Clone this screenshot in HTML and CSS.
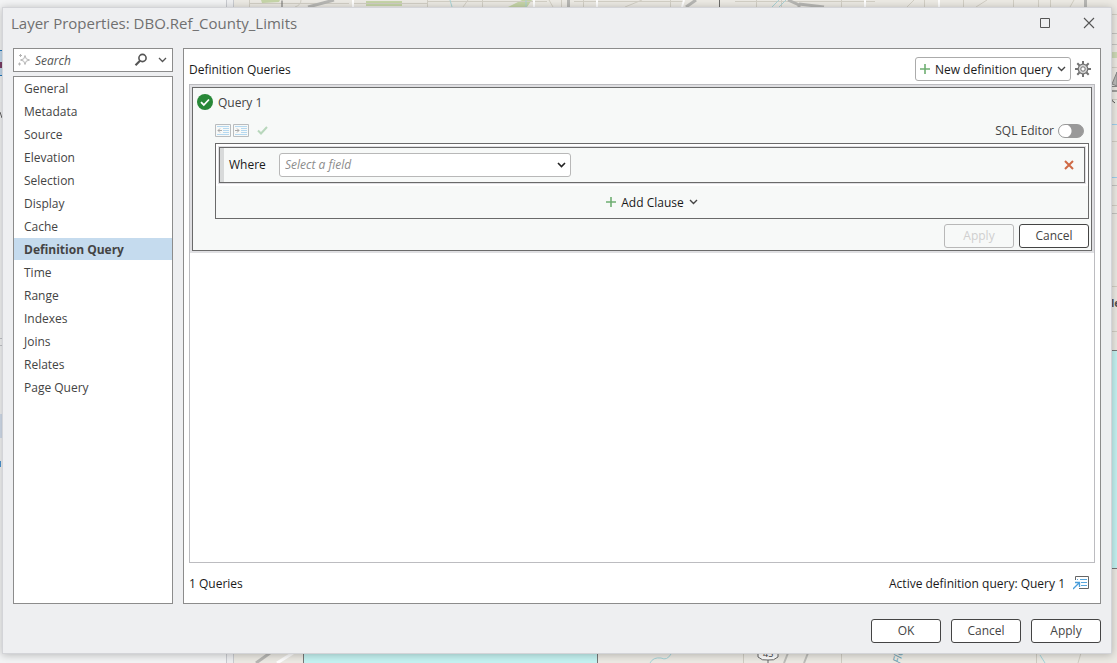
FILE: index.html
```
<!DOCTYPE html>
<html lang="en">
<head>
  <meta charset="UTF-8">
  <meta name="viewport" content="width=device-width, initial-scale=1.0">
  <title>Layer Properties: DBO.Ref_County_Limits</title>
  <link rel="stylesheet" href="styles.css">
</head>
<body>
<svg class="map" viewBox="0 0 1117 663" preserveAspectRatio="none" aria-hidden="true">
  <rect width="1117" height="663" fill="#eceae4"/>
  <!-- application pane left of the map -->
  <rect width="227" height="663" fill="#f3f4f5"/>
  <path d="M226.500 0v663M233.500 0v663" stroke="#c9cbd0"/>
  <rect x="227" width="6" height="663" fill="#eeeff1"/>
  <rect y="50" width="3" height="26" fill="#c5dbee"/>
  <path d="M0 50.500h3M0 75.500h3" stroke="#1d78c0"/>
  <path d="M0 338.500h3M0 345.500h3" stroke="#c4c6ca"/>
  <rect y="62" width="2" height="6" fill="#7c3e66"/>
  <rect y="414" width="3" height="24" fill="#d3dfed"/>
  <rect y="461" width="1" height="6" fill="#4f96d0"/>
  <path d="M0 112l2 6" stroke="#666"/>
  <!-- streets above the window -->
  <path d="M261 0h19l-1 2-17 1zM366 1h36v5h-36zM508 7l14-7h10l-5 7z" fill="#c6d5a8"/>
  <g fill="none" stroke="#d2cfc5">
    <path d="M249.500 0v7M249 3.500h100M301 0q0 5-6 7M353 3.500h74M427.500 0v7M427 1.500h120M468 0l-5 7M482.500 0v7M549 0l4 7M561.500 0v7M574 1.500h110M583.500 0v7M642 0l-17 7M670.500 0v7M735 1.500h140M756.500 0v7M781.500 0v7M841.500 0v7M914 0l-7 7M924.500 0v7M963.500 0v7M987 0l-11 7M1013.500 0v7M1038.500 0v7M1050.500 0v7M1074 0l-4 7"/>
    <path d="M1111 14.500h6M1111 67.500h6M1111 99.500h6M1111 141.500h6M1111 205.500h6M1111 286.500h6M1111 331.500h6"/>
  </g>
  <path d="M353 0v7M534 0v7M597 0v7M684 0l-2 7M865 0v7M939 0v7" stroke="#fff" stroke-width="2"/>
  <path d="M282 0.500v7M719.500 0v7" stroke="#6c6c6a"/>
  <path d="M308 7l26-7M686 7l10-7M788 0l11 5v2M799 4l25 3M568.500 0v7M1085.500 0v7" fill="none" stroke="#b7b7b4" stroke-width="3"/>
  <path d="M450 0l2 7M526 0v7M779 0l-7 7M786 0l-7 7" stroke="#a9d2d6" fill="none"/>
  <!-- right edge of the map -->
  <path d="M1111 33.500h6M1111 44.500h6M1111 185.500h6M1111 213.500h6" stroke="#c4c4c1"/>
  <path d="M1111 52h6v6h-6z" fill="#cfdbb8"/>
  <path d="M1112 84l5-12v14zM1111 86.500h6" fill="#bcbcba" stroke="#888"/>
  <path d="M1111 91h6M1111 97q0 4 4 6" fill="none" stroke="#555"/>
  <path d="M1111 124.500h6M1111 177.500h6" stroke="#9fd0f0"/>
  <rect x="1111" y="351" width="6" height="217" fill="#c5f3f2"/>
  <path d="M1111 350.500h6M1111 568.500h6" stroke="#777"/>
  <text class="map-label" x="1111" y="307">le</text>
  <!-- strip below the window -->
  <rect x="303" y="653" width="294" height="10" fill="#c5f3f2"/>
  <path d="M303.500 653v10M597.500 653v10" stroke="#777"/>
  <path d="M256 663l14-10" stroke="#b7b7b4" stroke-width="3"/>
  <path d="M277 663l16-10" stroke="#fff" stroke-width="3"/>
  <path d="M650 663q3-6 11-5 6 3 10-4M1040 655l5 8" stroke="#a3d3d9" fill="none"/>
  <path d="M758 653v4q4 4 10 3 6 1 10-3v-4M768 660v3" fill="#fff" stroke="#666"/>
  <text class="road-number" x="763" y="657">45</text>
  <path d="M784 663l4-10M804 663l4-10" stroke="#bdbdb9" stroke-width="2"/>
  <path d="M743.500 653v10M841.500 653v10M1036.500 653v10M1081 653l-3 10" stroke="#cfccc2"/>
  <text class="river-name" transform="translate(900 664) rotate(-75)">Flo</text>
</svg>

<main class="window">
  <header class="titlebar">
    <h1>Layer Properties: DBO.Ref_County_Limits</h1>
    <div class="window-controls">
      <button type="button" aria-label="Maximize">
        <svg width="12" height="12" viewBox="0 0 12 12"><path d="M1.500 1.500h9v9h-9z" fill="none" stroke="#555"/></svg>
      </button>
      <button type="button" aria-label="Close">
        <svg width="12" height="12" viewBox="0 0 12 12"><path d="M1 1l10 10M11 1L1 11" stroke="#555" stroke-width="1.100"/></svg>
      </button>
    </div>
  </header>

  <div class="content">
    <aside class="sidebar">
      <div class="search">
        <svg width="12" height="12" viewBox="0 0 12 12" fill="none" stroke="#b4b4b4" aria-hidden="true">
          <path d="M7 1.500l1.200 3.300L11.500 6 8.200 7.200 7 10.500 5.800 7.200 2.500 6l3.300-1.200z"/>
          <path d="M2.500 0v3M1 1.500h3M1.500 8.500v3M0 10h3"/>
        </svg>
        <input type="text" placeholder="Search" aria-label="Search">
        <button type="button" aria-label="Find">
          <svg width="14" height="14" viewBox="0 0 14 14" fill="none" stroke="#555"><circle cx="8.500" cy="5" r="3.600" stroke-width="1.600"/><path d="M6 7.800L1.500 12.300" stroke-width="2.200"/></svg>
        </button>
        <button type="button" aria-label="Search options">
          <svg width="9" height="6" viewBox="0 0 9 6"><path d="M1 1l3.500 3.500L8 1" fill="none" stroke="#555" stroke-width="1.300"/></svg>
        </button>
      </div>
      <nav class="pages">
        <a href="#">General</a>
        <a href="#">Metadata</a>
        <a href="#">Source</a>
        <a href="#">Elevation</a>
        <a href="#">Selection</a>
        <a href="#">Display</a>
        <a href="#">Cache</a>
        <a href="#" class="active">Definition Query</a>
        <a href="#">Time</a>
        <a href="#">Range</a>
        <a href="#">Indexes</a>
        <a href="#">Joins</a>
        <a href="#">Relates</a>
        <a href="#">Page Query</a>
      </nav>
    </aside>

    <section class="panel">
      <div class="panel-header">
        <h2>Definition Queries</h2>
        <button type="button" class="new-query">
          <svg width="10" height="10" viewBox="0 0 10 10"><path d="M5 0v10M0 5h10" stroke="#6fae72" stroke-width="1.600"/></svg>
          <span>New definition query</span>
          <svg width="9" height="6" viewBox="0 0 9 6"><path d="M1 1l3.500 3.500L8 1" fill="none" stroke="#444" stroke-width="1.400"/></svg>
        </button>
        <button type="button" class="icon-button" aria-label="Options">
          <svg width="16" height="16" viewBox="0 0 16 16" fill="none" stroke="#727272">
            <path d="M8 0v3M8 13v3M0 8h3M13 8h3M2.300 2.300l2.200 2.200M11.500 11.500l2.200 2.200M13.700 2.300l-2.200 2.200M4.500 11.500l-2.200 2.200" stroke-width="2"/>
            <circle cx="8" cy="8" r="4.800" fill="#d2d2d2" stroke-width="1.200"/>
            <circle cx="8" cy="8" r="2.200" fill="#fff"/>
          </svg>
        </button>
      </div>

      <div class="query-list">
        <article class="query">
          <h3>
            <svg width="16" height="16" viewBox="0 0 16 16"><circle cx="8" cy="8" r="8" fill="#288838"/><path d="M4 8.200l2.800 2.800L12 5.500" fill="none" stroke="#fff" stroke-width="1.800"/></svg>
            <span>Query 1</span>
          </h3>
          <div class="query-body">
            <div class="tools">
              <button type="button" aria-label="Remove indent" disabled>
                <svg width="16" height="13" viewBox="0 0 16 13" fill="none"><path d="M.5.500h15v12H.5z" stroke="#b9bcbe"/><path d="M2 2.500h12M8 4.500h6M8 6.500h6M8 8.500h6M2 10.500h12" stroke="#b5d8ef"/><path d="M7 6.500H3M5 4.500l-2 2 2 2" stroke="#aaa"/></svg>
              </button>
              <button type="button" aria-label="Add indent" disabled>
                <svg width="16" height="13" viewBox="0 0 16 13" fill="none"><path d="M.5.500h15v12H.5z" stroke="#b9bcbe"/><path d="M2 2.500h12M8 4.500h6M8 6.500h6M8 8.500h6M2 10.500h12" stroke="#b5d8ef"/><path d="M2 6.500h4M4 4.500l2 2-2 2" stroke="#aaa"/></svg>
              </button>
              <button type="button" class="verify" aria-label="Verify" disabled>
                <svg width="11" height="9" viewBox="0 0 11 9"><path d="M1 4.500l3 3L10 1" fill="none" stroke="#b8d7bc" stroke-width="2"/></svg>
              </button>
              <label class="sql">SQL Editor <input type="checkbox" class="switch"></label>
            </div>

            <div class="clauses">
              <div class="clause-wrap">
                <div class="clause">
                  <label for="field">Where</label>
                  <div class="field">
                    <select id="field">
                      <option>Select a field</option>
                    </select>
                    <svg width="9" height="6" viewBox="0 0 9 6"><path d="M1 1l3.500 3.500L8 1" fill="none" stroke="#222" stroke-width="1.600"/></svg>
                  </div>
                  <button type="button" class="remove" aria-label="Remove clause">
                    <svg width="10" height="10" viewBox="0 0 10 10"><path d="M1 1l8 8M9 1L1 9" stroke="#cf6a45" stroke-width="2"/></svg>
                  </button>
                </div>
              </div>
              <button type="button" class="add-clause">
                <svg width="10" height="10" viewBox="0 0 10 10"><path d="M5 0v10M0 5h10" stroke="#6fae72" stroke-width="1.600"/></svg>
                <span>Add Clause</span>
                <svg width="9" height="6" viewBox="0 0 9 6"><path d="M1 1l3.500 3.500L8 1" fill="none" stroke="#444" stroke-width="1.400"/></svg>
              </button>
            </div>

            <div class="query-actions">
              <button type="button" class="btn" disabled>Apply</button>
              <button type="button" class="btn">Cancel</button>
            </div>
          </div>
        </article>
      </div>

      <div class="panel-footer">
        <span>1 Queries</span>
        <span class="current">Active definition query: Query 1</span>
        <button type="button" class="icon-button" aria-label="Go to active query">
          <svg width="16" height="14" viewBox="0 0 16 14" fill="none">
            <path d="M2.500 4V.5h13v12H6" stroke="#666"/>
            <path d="M4 3.500h1M7 3.500h7M8 6.500h6M8 9.500h6" stroke="#5aa7dc"/>
            <path d="M0 13l6-6M2 6.500h4.500V11" stroke="#4a9edb" stroke-width="1.300"/>
          </svg>
        </button>
      </div>
    </section>
  </div>

  <footer class="buttons">
    <button type="button" class="btn">OK</button>
    <button type="button" class="btn">Cancel</button>
    <button type="button" class="btn">Apply</button>
  </footer>
</main>
</body>
</html>
```
FILE: styles.css
```
* {
  box-sizing: border-box;
}

body {
  margin: 0;
  min-height: 100vh;
  display: flex;
  padding: 7px 5px 9px 2px;
  font-family: "Open Sans", "Noto Sans", sans-serif;
  font-size: 12px;
  line-height: 16px;
  color: #444;
}

h1, h2, h3 {
  margin: 0;
  font-size: 12px;
  font-weight: normal;
}

button, input, select {
  font: inherit;
  color: inherit;
}

button {
  display: flex;
  align-items: center;
  justify-content: center;
  padding: 0;
  border: none;
  background: none;
}

svg {
  flex: none;
  display: block;
}

.map {
  position: absolute;
  top: 0;
  left: 0;
  width: 100%;
  height: 100%;
}

.map-label {
  font-size: 11px;
  font-weight: bold;
  fill: #555;
}

.road-number {
  font-size: 9px;
  fill: #444;
}

.river-name {
  font-size: 11px;
  font-style: italic;
  fill: #6fa3b5;
}

.window {
  position: relative;
  flex: 1;
  display: flex;
  flex-direction: column;
  padding: 0 10px 10px;
  border: 1px solid #d3d4d8;
  background: #eeeff1;
  box-shadow: 0 1px 8px rgba(0, 0, 0, 0.25);
}

.titlebar {
  display: flex;
  align-items: center;
  justify-content: space-between;
  height: 40px;
  margin-left: -2px;
  padding-bottom: 10px;
}

.titlebar h1 {
  font-size: 15px;
  line-height: 20px;
  color: #707070;
}

.window-controls {
  display: flex;
  gap: 32px;
  padding-right: 6px;
}

.content {
  flex: 1;
  display: flex;
  gap: 10px;
}

.sidebar {
  width: 160px;
  display: flex;
  flex-direction: column;
  gap: 4px;
}

.search {
  display: flex;
  align-items: center;
  gap: 5px;
  height: 24px;
  padding: 0 5px 0 4px;
  border: 1px solid #8c8c8c;
  background: #fff;
}

.search input {
  flex: 1;
  min-width: 0;
  padding: 2px 0 0;
  border: none;
  outline: none;
  background: none;
  font-style: italic;
}

.search input::placeholder {
  color: #555;
}

.search button + button {
  padding-left: 5px;
}

.pages {
  flex: 1;
  border: 1px solid #8c8c8c;
  background: #fff;
}

.pages a {
  display: block;
  height: 22px;
  margin-bottom: 1px;
  padding-left: 10px;
  line-height: 24px;
  color: #444;
  text-decoration: none;
}

.pages .active {
  background: #c5dbee;
  font-weight: bold;
}

.panel {
  flex: 1;
  display: flex;
  flex-direction: column;
  padding: 8px 5px 0;
  border: 1px solid #8c8c8c;
  background: #fff;
  color: #1a1a1a;
}

.panel-header {
  display: flex;
  align-items: center;
  gap: 4px;
  height: 24px;
  margin-bottom: 3px;
}

.panel-header h2 {
  flex: 1;
  padding-top: 2px;
}

/* keeps button captions level with their icons */
button span,
.query h3 span,
.panel-footer > span {
  padding-top: 2px;
}

.new-query {
  gap: 5px;
  height: 24px;
  padding: 0 4px;
  border: 1px solid #ababab;
  border-radius: 3px;
  background: #fff;
}

.panel-header .icon-button {
  margin-right: 4px;
}

.query-list {
  flex: 1;
  padding: 2px;
  border: 1px solid #bcbcc0;
}

.query {
  padding: 6px 2px 2px 4px;
  border: 1px solid #6a6a6a;
  background: #f7f9f8;
  box-shadow: 0 0 0 2px #dfdfe2;
}

.query h3 {
  display: flex;
  align-items: center;
  gap: 5px;
  height: 16px;
  color: #444;
}

.query-body {
  padding-left: 18px;
}

.tools {
  display: flex;
  align-items: center;
  gap: 2px;
  margin: 13px 0 5px;
  height: 15px;
}

.verify {
  margin-left: 6px;
}

.sql {
  display: flex;
  align-items: center;
  gap: 4px;
  margin-left: auto;
  margin-right: 5px;
  color: #444;
}

.switch {
  appearance: none;
  width: 26px;
  height: 14px;
  margin: 0;
  border: 1px solid #999;
  border-radius: 7px;
  background: radial-gradient(circle at 6px 6px, #fff 6px, #999 7px);
}

.clauses {
  border: 1px solid #6a6a6a;
}

.clause-wrap {
  padding: 3px;
  background: #fff;
}

.clause {
  display: flex;
  align-items: center;
  height: 36px;
  padding: 0 10px 0 5px;
  border: 1px solid #6a6a6a;
  background: #f7f9f8;
  box-shadow: inset 4px 0 #d8dada, 0 0 0 1px #dfdfe2;
}

.clause label {
  width: 54px;
  padding-left: 4px;
}

.field {
  position: relative;
  width: 292px;
}

.field select {
  appearance: none;
  display: block;
  width: 100%;
  height: 24px;
  padding: 0 5px;
  border: 1px solid #b8b8b8;
  border-radius: 3px;
  background: #fff;
  font-style: italic;
  color: #8c8c8c;
}

/* arrow over the select */
.field svg {
  position: absolute;
  top: 9px;
  right: 5px;
  pointer-events: none;
}

.remove {
  margin-left: auto;
}

.add-clause {
  gap: 5px;
  width: 100%;
  height: 32px;
}

.query-actions {
  display: flex;
  justify-content: flex-end;
  gap: 5px;
  margin-top: 5px;
}

.btn {
  width: 70px;
  height: 24px;
  border: 1px solid #444;
  border-radius: 3px;
  background: #fff;
  color: #444;
}

.btn:disabled {
  border-color: #b8b8b8;
  background: #f7f9f8;
  color: #cfcfcf;
}

.panel-footer {
  display: flex;
  align-items: center;
  gap: 8px;
  height: 40px;
  padding-right: 6px;
}

.current {
  margin-left: auto;
}

.buttons {
  display: flex;
  justify-content: flex-end;
  gap: 10px;
  margin-top: 15px;
}
```
